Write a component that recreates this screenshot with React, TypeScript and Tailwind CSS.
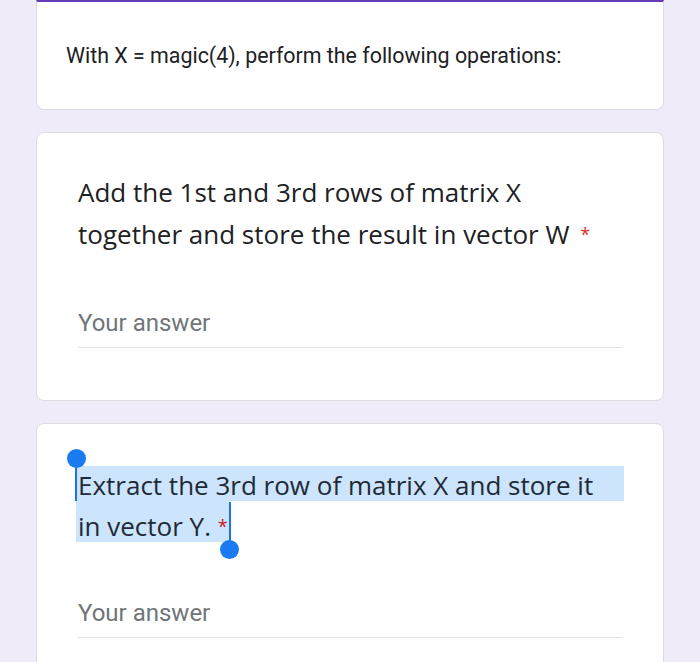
export default function App() {
  return (
    <div className="min-h-screen bg-[#f0ebf8] px-[36px] pb-10 font-['Roboto',sans-serif]">
      {/* description card, top edge cut off */}
      <div className="h-[110px] bg-white border-t-2 border-t-[#673ab7] border-x border-b border-[#dadce0] rounded-b-lg pl-[29px] flex items-center">
        <p className="text-[21.4px] leading-7 text-[#202124]">
          With X = magic(4), perform the following operations:
        </p>
      </div>

      <div className="mt-[22px] h-[269px] bg-white border border-[#dadce0] rounded-lg px-[41px] pt-[38px]">
        <p className="text-[26px] leading-[42px] text-[#202124] font-['Open_Sans',sans-serif]">
          Add the 1st and 3rd rows of matrix X together and store the result in vector W{' '}
          <span className="text-[#d93025] text-[18px] align-top ml-1">*</span>
        </p>
        <div className="mt-[54px] text-[24px] leading-7 text-[#70757a] pb-[10px] border-b border-[#e0e0e0]">
          Your answer
        </div>
      </div>

      <div className="mt-[22px] h-[260px] bg-white border border-[#dadce0] rounded-lg px-[41px] pt-[41px]">
        <div className="relative">
          {/* text selection overlay */}
          <div className="absolute left-[-2px] right-[-2px] top-[1px] h-[35px] bg-[#cce4fc]" />
          <div className="absolute left-[-2px] w-[154px] top-[36px] h-[41px] bg-[#cce4fc]" />
          <p className="relative text-[26px] leading-[41px] text-[#1f2a37] font-['Open_Sans',sans-serif] pr-[10px]">
            Extract the 3rd row of matrix X and store it in vector Y.{' '}
            <span className="text-[#c5221f] text-[18px] align-top">*</span>
          </p>
          {/* selection handles */}
          <div className="absolute left-[-3px] top-[-6px] w-[2px] h-[42px] bg-[#1a73e8]" />
          <div className="absolute left-[-11px] top-[-16px] w-[19px] h-[19px] rounded-full bg-[#1a7cf0]" />
          <div className="absolute left-[151px] top-[37px] w-[2px] h-[46px] bg-[#1a73e8]" />
          <div className="absolute left-[142px] top-[75px] w-[19px] h-[19px] rounded-full bg-[#1a7cf0]" />
        </div>
        <div className="mt-[52px] text-[24px] leading-7 text-[#70757a] pb-[10px] border-b border-[#e0e0e0]">
          Your answer
        </div>
      </div>
    </div>
  );
}
